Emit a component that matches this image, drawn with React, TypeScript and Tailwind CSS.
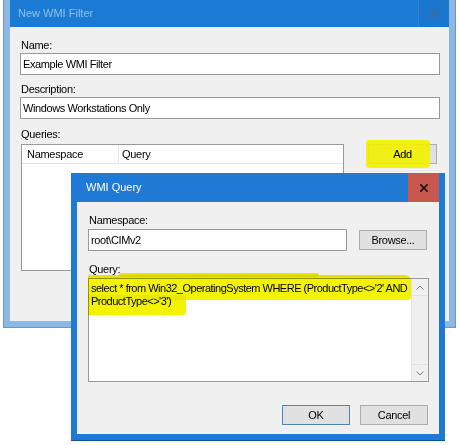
const FONT = "font-['Liberation_Sans',Arial,sans-serif]";

const CloseGlyph = ({ color, size, stroke }: { color: string; size: number; stroke: number }) => (
  <svg width={size} height={size} viewBox="0 0 10 10">
    <path d="M1 1 L9 9 M9 1 L1 9" stroke={color} strokeWidth={stroke} strokeLinecap="square" />
  </svg>
);

const Button = ({ label, primary, className = '' }: { label: string; primary?: boolean; className?: string }) => (
  <div
    className={`flex h-[20px] w-[68px] items-center justify-center border bg-[#e1e1e1] text-[11px] tracking-[-0.3px] text-black ${
      primary ? 'border-[#4a86c0]' : 'border-[#adadad]'
    } ${className}`}
  >
    {label}
  </div>
);

const Field = ({ value, className = '' }: { value: string; className?: string }) => (
  <div
    className={`flex h-[22px] items-center border border-[#9a9a9a] bg-white pl-[2px] text-[11px] tracking-[-0.4px] text-black ${className}`}
  >
    {value}
  </div>
);

// marker-pen strokes drawn over the screenshot
const Marker = ({ className }: { className: string }) => (
  <div className={`pointer-events-none absolute bg-[#f3f300] mix-blend-multiply ${className}`} />
);

const WmiQueryDialog = () => (
  <div className="absolute top-[173px] left-[71px] flex h-[267px] w-[374px] flex-col bg-[#1e7ad5] px-[6px] pb-[6px] shadow-[0_1px_0_#0c4f93]">
    <div className="flex h-[29px] items-center">
      <span className="flex-1 pl-[9px] text-[11px] text-white">WMI Query</span>
      <div className="flex h-full w-[31px] items-center justify-center bg-[#c8574d]">
        <CloseGlyph color="#111" size={8} stroke={2} />
      </div>
    </div>
    <div className="relative flex flex-1 flex-col bg-[#f0f0f0] pt-[12px] pr-[11px] pl-[11px]">
      <span className="pl-[1px] text-[11px] leading-[13px] tracking-[-0.3px] text-black">Namespace:</span>
      <div className="mt-[2px] flex items-start gap-[12px]">
        <Field value="root\CIMv2" className="h-[21px] w-[259px]" />
        <Button label="Browse..." className="mt-[1px]" />
      </div>
      <span className="mt-[12px] pl-[1px] text-[11px] leading-[13px] tracking-[-0.3px] text-black">Query:</span>
      <div className="relative mt-[2px] flex h-[104px] w-[341px] border border-[#9a9a9a] bg-white">
        <div className="flex-1 pt-[3px] pl-[2px] text-[11px] leading-[13px] tracking-[-0.5px] text-black">
          <div>select * from Win32_OperatingSystem WHERE (ProductType&lt;&gt;'2' AND</div>
          <div>ProductType&lt;&gt;'3')</div>
        </div>
        <div className="flex w-[17px] flex-col justify-between border-l border-[#e3e3e3] bg-[#f0f0f0]">
          <div className="flex h-[17px] items-center justify-center border-b border-[#e3e3e3]">
            <svg width="8" height="5" viewBox="0 0 8 5">
              <path d="M0.5 4.5 L4 1 L7.5 4.5" fill="none" stroke="#7a7a7a" />
            </svg>
          </div>
          <div className="flex h-[17px] items-center justify-center border-t border-[#e3e3e3]">
            <svg width="8" height="5" viewBox="0 0 8 5">
              <path d="M0.5 0.5 L4 4 L7.5 0.5" fill="none" stroke="#7a7a7a" />
            </svg>
          </div>
        </div>
        <Marker className="top-[-4px] left-[-1px] h-[25px] w-[323px] rounded-tr-[6px] rounded-br-[3px]" />
        <Marker className="top-[16px] left-[-1px] h-[20px] w-[98px] rounded-br-[4px]" />
        <Marker className="top-[-6px] left-[30px] h-[4px] w-[200px] rounded-full" />
      </div>
      <div className="mt-auto flex justify-end gap-[10px] pb-[9px]">
        <Button label="OK" primary />
        <Button label="Cancel" />
      </div>
    </div>
  </div>
);

export default function App() {
  return (
    <div className={`relative h-[445px] w-[459px] overflow-hidden bg-white ${FONT}`}>
      <div className="ml-[3px] flex h-[328px] w-[453px] flex-col border border-t-0 border-[#7096c0] bg-[#8db7e4] px-[6px] pb-[6px]">
        <div className="flex h-[27px] items-center bg-[#1b7bd4]">
          <span className="flex-1 pl-[8px] text-[11px] text-[#8ec0ee]">New WMI Filter</span>
          <div className="flex h-full w-[31px] items-center justify-center border-l border-[#2a84d8] bg-[#1976cc]">
            <CloseGlyph color="#3f6a9c" size={9} stroke={1.8} />
          </div>
        </div>
        <div className="flex flex-1 flex-col bg-[#f0f0f0] pt-[12px] pr-[9px] pl-[10px]">
          <span className="pl-[1px] text-[11px] leading-[13px] tracking-[-0.3px] text-black">Name:</span>
          <Field value="Example WMI Filter" className="mt-[1px]" />
          <span className="mt-[8px] pl-[1px] text-[11px] leading-[13px] tracking-[-0.3px] text-black">Description:</span>
          <Field value="Windows Workstations Only" className="mt-[1px]" />
          <span className="mt-[9px] pl-[1px] text-[11px] leading-[13px] tracking-[-0.3px] text-black">Queries:</span>
          <div className="mt-[3px] flex items-start">
            <div className="ml-[1px] flex h-[127px] w-[323px] flex-col border border-[#9a9a9a] bg-white">
              <div className="flex h-[19px] items-center border-b border-[#e5e5e5] text-[11px] tracking-[-0.3px] text-black">
                <span className="w-[96px] pl-[5px]">Namespace</span>
                <span className="h-full border-l border-[#e5e5e5] pl-[3px] leading-[18px]">Query</span>
              </div>
            </div>
            <div className="relative ml-[24px]">
              <Button label="Add" className="h-[20px] w-[69px]" />
              <div className="pointer-events-none absolute top-[-4px] left-[-2px] h-[28px] w-[64px] rounded-[3px] bg-[#f2f200] opacity-90" />
              <span className="pointer-events-none absolute inset-0 flex items-center justify-center text-[11px] tracking-[-0.3px] text-black">
                Add
              </span>
            </div>
          </div>
        </div>
      </div>
      <WmiQueryDialog />
    </div>
  );
}
